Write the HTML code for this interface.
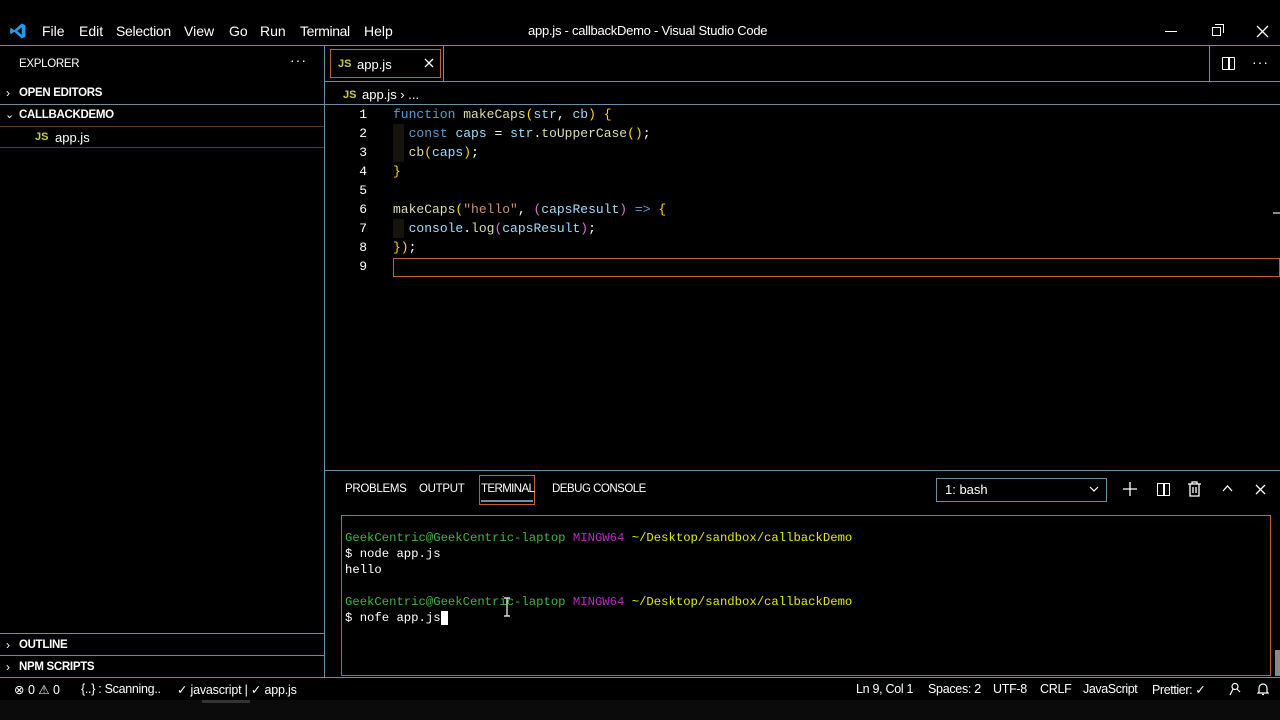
<!DOCTYPE html>
<html><head><meta charset="utf-8">
<style>
*{box-sizing:border-box;margin:0;padding:0}
body{width:1280px;height:720px;background:#000;color:#fff;font-family:"Liberation Sans",sans-serif;font-size:13px;position:relative;overflow:hidden}
.a{position:absolute;white-space:pre}
.b{background:#6b8fa3}
.mono{font-family:"Liberation Mono",monospace}
.code div{position:absolute;left:0;height:19px;line-height:19px;white-space:pre}
.k{color:#569cd6}.f{color:#dcdcaa}.v{color:#9cdcfe}.s{color:#ce9178}.y{color:#ffd700}.m{color:#da70d6}
.ln{position:absolute;width:30px;text-align:right;left:337px;font-family:"Liberation Mono",monospace;font-size:13px}
.t div{position:absolute;left:0;white-space:pre;line-height:16px}
.g{color:#3cb83c}.p{color:#c026c0}.yy{color:#e5e510}
.mn{top:23px;font-size:14px}
.st{top:682px;font-size:12.5px}
.pt{top:483px;font-size:11.5px;letter-spacing:-0.3px}
</style></head><body>
<svg class="a" style="left:9px;top:22px" width="18" height="18" viewBox="0 0 24 24"><path d="M17 2 L22 4.5 V19.5 L17 22 L7 13 L3 16 L1.5 15 V9 L3 8 L7 11 Z M17 7 L11 12 L17 17 Z" fill="#1f9cf0"/></svg>
<div class="a mn" style="left:42px">File</div>
<div class="a mn" style="left:79px">Edit</div>
<div class="a mn" style="left:116px;letter-spacing:-0.3px">Selection</div>
<div class="a mn" style="left:184px">View</div>
<div class="a mn" style="left:229px">Go</div>
<div class="a mn" style="left:260px">Run</div>
<div class="a mn" style="left:300px;letter-spacing:-0.4px">Terminal</div>
<div class="a mn" style="left:364px">Help</div>
<div class="a" style="top:23px;left:528px;font-size:13px;letter-spacing:-0.25px">app.js - callbackDemo - Visual Studio Code</div>
<div class="a" style="left:1165px;top:31px;width:12px;height:1px;background:#fff"></div>
<div class="a" style="left:1212px;top:27px;width:9px;height:9px;border:1px solid #fff"></div>
<div class="a" style="left:1215px;top:24px;width:9px;height:9px;border-top:1px solid #fff;border-right:1px solid #fff"></div>
<svg class="a" style="left:1256px;top:25px" width="13" height="13"><path d="M1 1L12 12M12 1L1 12" stroke="#fff" stroke-width="1.3"/></svg>
<div class="a b" style="left:0;top:45px;width:1280px;height:1px"></div>
<div class="a" style="left:19px;top:58px;font-size:11.5px;letter-spacing:-0.3px">EXPLORER</div>
<div class="a" style="left:290px;top:52px;font-size:14px;letter-spacing:1px">···</div>
<div class="a" style="left:6px;top:86px;font-size:12px">›</div>
<div class="a" style="left:19px;top:87px;font-size:11.5px;font-weight:bold;letter-spacing:-0.3px">OPEN EDITORS</div>
<div class="a b" style="left:0;top:104px;width:324px;height:1px"></div>
<div class="a" style="left:5px;top:108px;font-size:11px">⌄</div>
<div class="a" style="left:19px;top:109px;font-size:11.5px;font-weight:bold;letter-spacing:-0.3px">CALLBACKDEMO</div>
<div class="a" style="left:0;top:126px;width:324px;height:1px;background:#5a3520"></div>
<div class="a" style="left:35px;top:131px;font-size:11px;color:#cbcb41;font-weight:bold">JS</div>
<div class="a" style="left:55px;top:130px;font-size:13px">app.js</div>
<div class="a" style="left:0;top:147px;width:324px;height:1px;background:#5a3520"></div>
<div class="a b" style="left:0;top:633px;width:324px;height:1px"></div>
<div class="a" style="left:6px;top:638px;font-size:12px">›</div>
<div class="a" style="left:19px;top:639px;font-size:11.5px;font-weight:bold;letter-spacing:-0.3px">OUTLINE</div>
<div class="a b" style="left:0;top:655px;width:324px;height:1px"></div>
<div class="a" style="left:6px;top:660px;font-size:12px">›</div>
<div class="a" style="left:19px;top:661px;font-size:11.5px;font-weight:bold;letter-spacing:-0.3px">NPM SCRIPTS</div>
<div class="a b" style="left:324px;top:46px;width:1px;height:632px"></div>
<div class="a" style="left:330px;top:49px;width:111px;height:29px;border:1px solid #c0622d"></div>
<div class="a" style="left:338px;top:58px;font-size:11px;color:#cbcb41;font-weight:bold">JS</div>
<div class="a" style="left:357px;top:57px;font-size:13px">app.js</div>
<svg class="a" style="left:424px;top:58px" width="10" height="10"><path d="M1 1L9 9M9 1L1 9" stroke="#fff" stroke-width="1.3"/></svg>
<div class="a b" style="left:443px;top:46px;width:1px;height:36px"></div>
<div class="a b" style="left:1209px;top:46px;width:1px;height:36px"></div>
<div class="a" style="left:1222px;top:57px;width:13px;height:13px;border:1.5px solid #fff;border-radius:1px"></div>
<div class="a" style="left:1228px;top:57px;width:1.5px;height:13px;background:#fff"></div>
<div class="a" style="left:1252px;top:54px;font-size:14px;letter-spacing:1px">···</div>
<div class="a b" style="left:325px;top:81px;width:955px;height:1px"></div>
<div class="a" style="left:343px;top:89px;font-size:11px;color:#cbcb41;font-weight:bold">JS</div>
<div class="a" style="left:362px;top:87px;font-size:13px">app.js › ...</div>
<div class="a b" style="left:325px;top:104px;width:955px;height:1px"></div>
<div class="ln" style="top:105px;line-height:19px">1<br>2<br>3<br>4<br>5<br>6<br>7<br>8<br>9</div>
<div class="a" style="left:393px;top:258px;width:887px;height:19px;border:1px solid #c0622d"></div>
<div class="a" style="left:393px;top:124px;width:11px;height:38px;background:#14140c"></div>
<div class="a" style="left:393px;top:219px;width:11px;height:19px;background:#14140c"></div>
<div class="a code mono" style="left:393px;top:105px;font-size:13px">
<div style="top:0"><span class="k">function</span> <span class="f">makeCaps</span><span class="y">(</span><span class="v">str</span>, <span class="v">cb</span><span class="y">)</span> <span class="y">{</span></div>
<div style="top:19px">  <span class="k">const</span> <span class="v">caps</span> = <span class="v">str</span>.<span class="f">toUpperCase</span><span class="y">()</span>;</div>
<div style="top:38px">  <span class="f">cb</span><span class="y">(</span><span class="v">caps</span><span class="y">)</span>;</div>
<div style="top:57px"><span class="y">}</span></div>
<div style="top:95px"><span class="f">makeCaps</span><span class="y">(</span><span class="s">"hello"</span>, <span class="m">(</span><span class="v">capsResult</span><span class="m">)</span> <span class="k">=&gt;</span> <span class="y">{</span></div>
<div style="top:114px">  <span class="v">console</span>.<span class="f">log</span><span class="m">(</span><span class="v">capsResult</span><span class="m">)</span>;</div>
<div style="top:133px"><span class="y">})</span>;</div>
</div>
<div class="a" style="left:1273px;top:212px;width:7px;height:2px;background:#888"></div>
<div class="a b" style="left:325px;top:470px;width:955px;height:1px"></div>
<div class="a pt" style="left:345px">PROBLEMS</div>
<div class="a pt" style="left:419px">OUTPUT</div>
<div class="a" style="left:479px;top:475px;width:56px;height:30px;border:1px solid #c0622d"></div>
<div class="a pt" style="left:481px;letter-spacing:-0.6px">TERMINAL</div>
<div class="a" style="left:481px;top:500px;width:52px;height:2px;background:#6b8fa3"></div>
<div class="a pt" style="left:552px;letter-spacing:-0.5px">DEBUG CONSOLE</div>
<div class="a" style="left:936px;top:478px;width:171px;height:24px;border:1px solid #6b8fa3"></div>
<div class="a" style="left:945px;top:482px;font-size:13px">1: bash</div>
<svg class="a" style="left:1089px;top:486px" width="10" height="7"><path d="M1 1L5 5L9 1" stroke="#fff" fill="none" stroke-width="1.2"/></svg>
<svg class="a" style="left:1123px;top:482px" width="14" height="14"><path d="M7 0V14M0 7H14" stroke="#fff" stroke-width="1.3"/></svg>
<div class="a" style="left:1157px;top:483px;width:13px;height:13px;border:1.5px solid #fff"></div>
<div class="a" style="left:1163px;top:483px;width:1.5px;height:13px;background:#fff"></div>
<svg class="a" style="left:1187px;top:481px" width="15" height="16"><path d="M1 3H14M5 3V1H10V3M3 3V15H12V3M6 6V12M9 6V12" stroke="#fff" fill="none" stroke-width="1.3"/></svg>
<svg class="a" style="left:1222px;top:485px" width="11" height="7"><path d="M1 6L5.5 1L10 6" stroke="#fff" fill="none" stroke-width="1.3"/></svg>
<svg class="a" style="left:1255px;top:484px" width="11" height="11"><path d="M1 1L10 10M10 1L1 10" stroke="#fff" stroke-width="1.3"/></svg>
<div class="a" style="left:341px;top:515px;width:930px;height:161px;border:1px solid #c0622d"></div>
<div class="a t mono" style="left:345px;top:530px;font-size:12.25px">
<div style="top:0"><span class="g">GeekCentric@GeekCentric-laptop</span> <span class="p">MINGW64</span> <span class="yy">~/Desktop/sandbox/callbackDemo</span></div>
<div style="top:16px">$ node app.js</div>
<div style="top:32px">hello</div>
<div style="top:64px"><span class="g">GeekCentric@GeekCentric-laptop</span> <span class="p">MINGW64</span> <span class="yy">~/Desktop/sandbox/callbackDemo</span></div>
<div style="top:80px">$ nofe app.js<span style="background:#fff"> </span></div>
</div>
<svg class="a" style="left:502px;top:597px" width="10" height="20"><path d="M2 1H8M5 1V19M2 19H8" stroke="#fff" stroke-width="1.2" fill="none"/></svg>
<div class="a" style="left:1275px;top:650px;width:5px;height:26px;background:#888"></div>
<div class="a b" style="left:0;top:677px;width:1280px;height:1px"></div>
<div class="a st" style="left:14px">⊗ 0 ⚠ 0</div>
<div class="a st" style="left:81px;letter-spacing:-0.3px">{..} : Scanning..</div>
<div class="a st" style="left:177px;letter-spacing:-0.2px">✓ javascript | ✓ app.js</div>
<div class="a st" style="left:856px;letter-spacing:-0.3px">Ln 9, Col 1</div>
<div class="a st" style="left:928px;letter-spacing:-0.3px">Spaces: 2</div>
<div class="a st" style="left:993px;letter-spacing:-0.3px">UTF-8</div>
<div class="a st" style="left:1040px;letter-spacing:-0.3px">CRLF</div>
<div class="a st" style="left:1083px;letter-spacing:-0.4px">JavaScript</div>
<div class="a st" style="left:1152px;letter-spacing:-0.4px">Prettier: ✓</div>
<svg class="a" style="left:1228px;top:682px" width="14" height="14"><circle cx="7" cy="4.5" r="3" stroke="#fff" fill="none" stroke-width="1.2"/><path d="M2 13L5 7M9 7L12 10" stroke="#fff" stroke-width="1.2" fill="none"/></svg>
<svg class="a" style="left:1257px;top:682px" width="12" height="14"><path d="M2 10V6A4 4 0 0 1 10 6V10L11 11H1Z M5 12.5H7" stroke="#fff" fill="none" stroke-width="1.2"/></svg>
<div class="a" style="left:0;top:700px;width:1280px;height:20px;background:#0b0b0b"></div>
<div class="a" style="left:202px;top:700px;width:48px;height:3px;background:#333"></div>
</body></html>
